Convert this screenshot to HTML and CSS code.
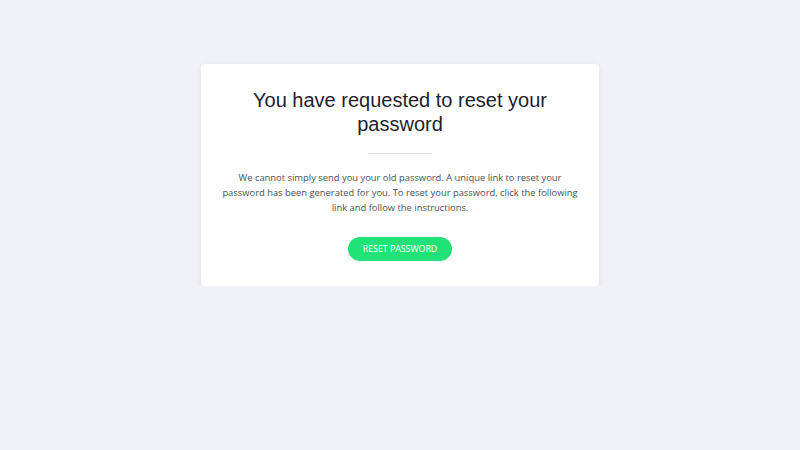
FILE: index.html
```html
<!DOCTYPE html>
<html lang="en">

<head>
    <meta charset="UTF-8">
    <meta name="viewport" content="width=device-width, initial-scale=1.0">
    <title>Reset your password</title>
    <link rel="stylesheet" href="styles.css">
</head>

<body>
    <div class="card">
        <h1>You have requested to reset your password</h1>
        <div class="divider"></div>
        <p>We cannot simply send you your old password. A unique link to reset your password has been generated for you. To reset your password, click the following link and follow the instructions.</p>
        <a class="btn" href="#">RESET PASSWORD</a>
    </div>
</body>

</html>
```

FILE: styles.css
```css
body {
    margin: 0;
    background: #f0f2f7;
    font-family: "Open Sans", sans-serif;
}

.card {
    width: 398px;
    box-sizing: border-box;
    margin: 64px auto 0;
    padding: 24px 18px 25px;
    background: #fff;
    border-radius: 3px;
    box-shadow: 0 2px 8px rgba(30, 40, 70, 0.08);
    text-align: center;
}

h1 {
    margin: 0 10px;
    font-family: "Liberation Sans", Arial, sans-serif;
    font-weight: normal;
    font-size: 20px;
    line-height: 24px;
    color: #1e1e2d;
}

.divider {
    width: 64px;
    height: 1px;
    background: #dcdcdc;
    margin: 17px auto 16px;
}

p {
    margin: 0;
    font-size: 9.4px;
    line-height: 15px;
    color: #4a5258;
}

.btn {
    display: inline-block;
    margin-top: 22px;
    width: 104px;
    height: 24px;
    line-height: 24px;
    border-radius: 12px;
    background: #20e277;
    color: #fff;
    font-size: 8.8px;
    text-decoration: none;
}
```
